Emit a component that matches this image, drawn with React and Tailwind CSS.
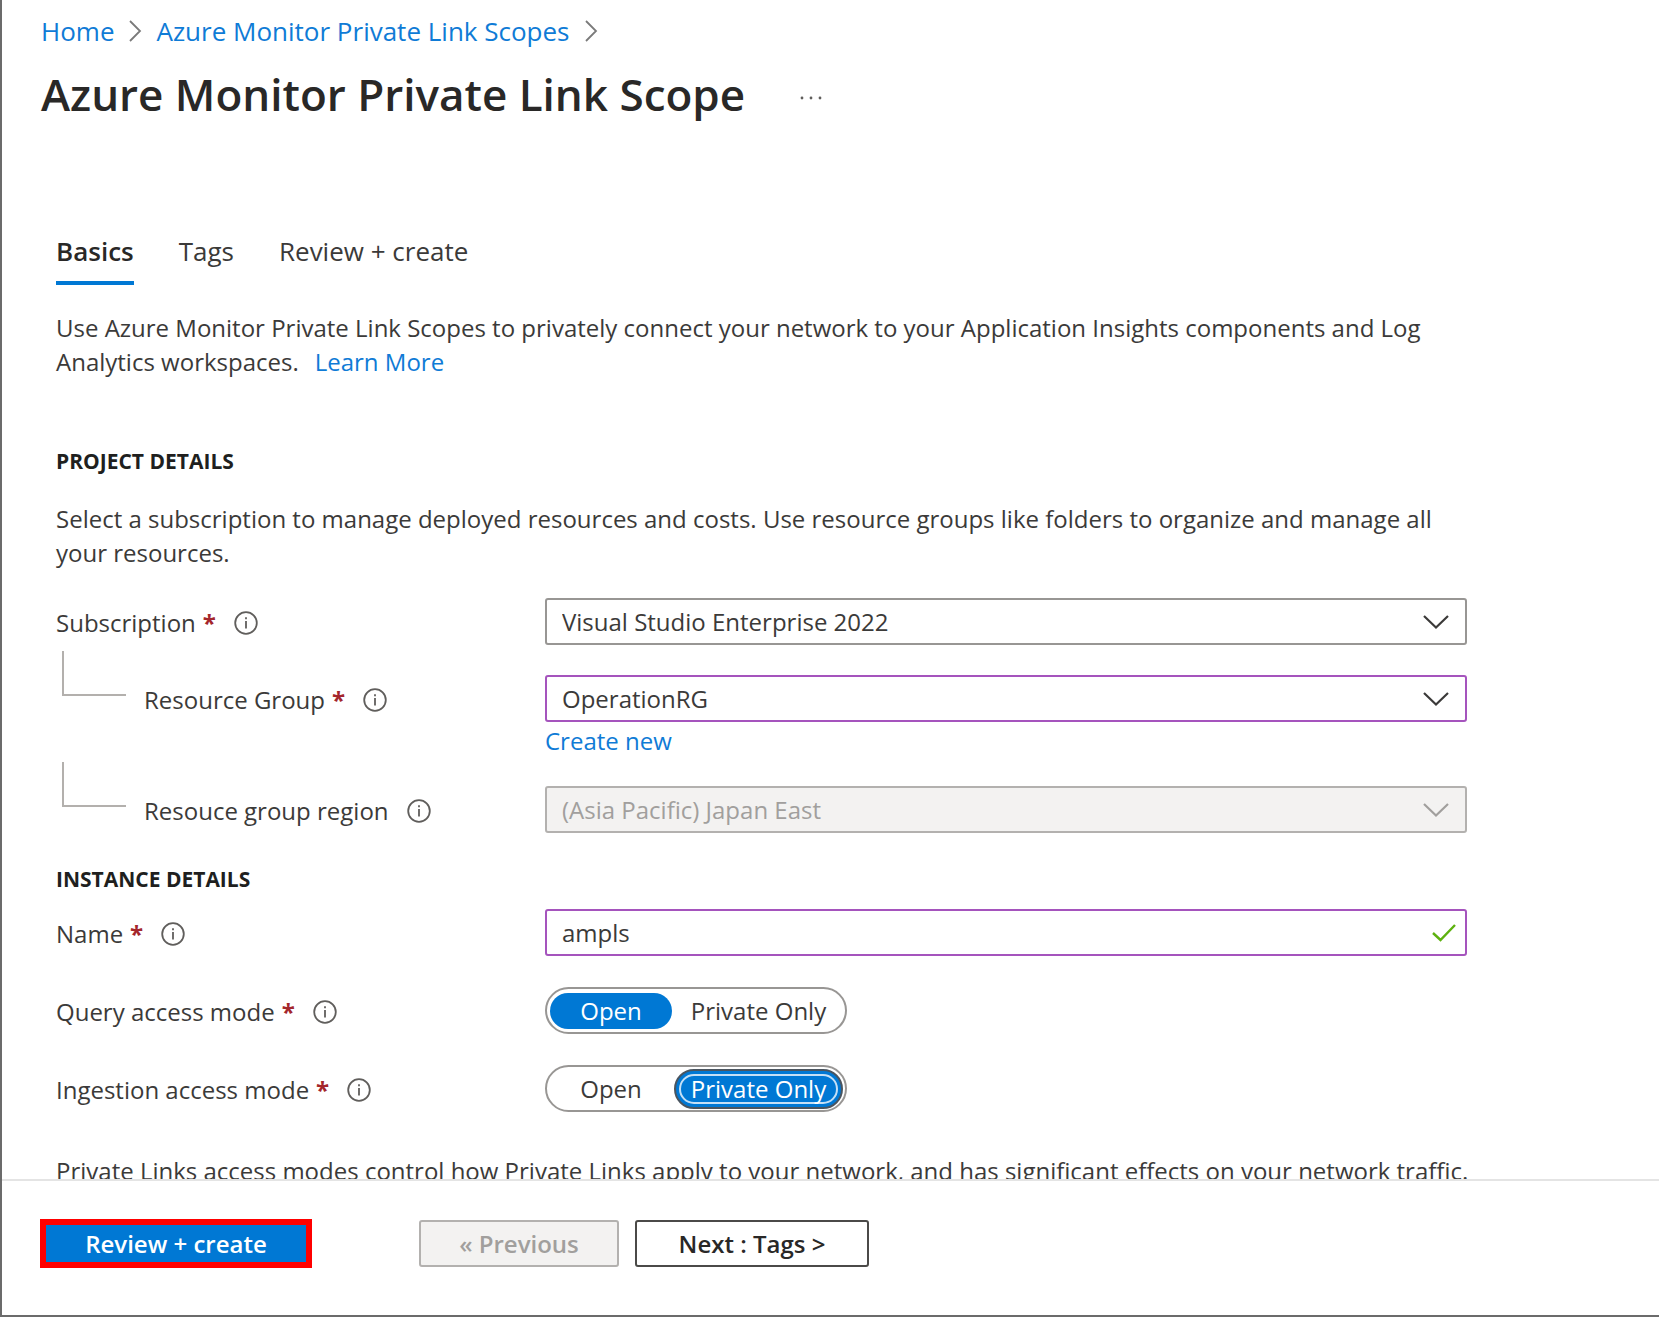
import React, { useState } from 'react';
import clsx from 'clsx';

const tabs = ['Basics', 'Tags', 'Review + create'];

const ChevronDown = ({ className }) => (
  <svg viewBox="0 0 26 16" fill="none" stroke="currentColor" strokeWidth="2.2" className={clsx('w-[26px] h-4', className)}>
    <path d="M1 2 L13 13.5 L25 2" />
  </svg>
);

const Crumb = () => (
  <svg viewBox="0 0 14 22" fill="none" stroke="#7a7a7a" strokeWidth="1.8" className="w-3.5 h-[22px]" aria-hidden="true">
    <path d="M2 1 L12 11 L2 21" />
  </svg>
);

const InfoButton = ({ about }) => (
  <button type="button" aria-label={`About ${about}`} className="ml-[18px] shrink-0">
    <svg viewBox="0 0 24 24" fill="none" stroke="#605e5c" className="w-6 h-6">
      <circle cx="12" cy="12" r="10.8" strokeWidth="1.8" />
      <path d="M12 10 V17.5" strokeWidth="1.8" />
      <path d="M12 6.2 V8.2" strokeWidth="1.8" />
    </svg>
  </button>
);

const FieldLabel = ({ id, text, required, nested }) => (
  <div className="flex items-center h-12 pt-0.5">
    {nested && <div className="w-16 h-[45px] ml-1.5 mr-[18px] -mt-[54px] border-l-2 border-b-2 border-[#b3b0ad]" />}
    <label id={`${id}-label`} htmlFor={id}>
      {text}
      {required && <span className="ml-[7px] font-bold text-[#a4262c]">*</span>}
    </label>
    <InfoButton about={text} />
  </div>
);

const SelectField = ({ id, value, edited, disabled }) => (
  <div className="relative">
    <select
      id={id}
      disabled={disabled}
      className={clsx(
        'block w-full h-[47px] pl-[15px] pr-14 rounded-[3px] border-2 appearance-none opacity-100',
        edited && 'border-[#a554bd] bg-white',
        disabled && 'border-[#b3b1af] bg-[#f3f2f1] text-[#a19f9d]',
        !edited && !disabled && 'border-[#989694] bg-white'
      )}
    >
      <option>{value}</option>
    </select>
    <ChevronDown
      className={clsx(
        'absolute right-[18px] top-4 pointer-events-none',
        disabled ? 'text-[#a19f9d]' : 'text-[#3b3a39]'
      )}
    />
  </div>
);

const ModeToggle = ({ id, initial, focused }) => {
  const [mode, setMode] = useState(initial);

  return (
    <div
      id={id}
      role="radiogroup"
      aria-labelledby={`${id}-label`}
      className="flex items-center gap-0.5 w-[302px] h-[47px] pl-[3px] pr-0.5 rounded-full border-2 border-[#989694] bg-white"
    >
      {['Open', 'Private Only'].map((option) => {
        const active = mode === option;
        return (
          <label
            key={option}
            className={clsx(
              'relative flex items-center justify-center rounded-full cursor-pointer',
              option === 'Open' ? 'w-[122px]' : 'flex-1',
              active && 'bg-[#0078d4] text-white',
              active && focused ? 'h-10 border-2 border-[#4a5560]' : 'h-9'
            )}
          >
            <input
              type="radio"
              name={id}
              checked={active}
              onChange={() => setMode(option)}
              className="sr-only"
            />
            {active && focused && (
              <span className="absolute inset-[3px] rounded-full border-2 border-[#c5e0f6]" />
            )}
            <span className="relative">{option}</span>
          </label>
        );
      })}
    </div>
  );
};

const SectionTitle = ({ children }) => (
  <h2 className="text-[21px] leading-[30px] font-bold text-[#201f1e]">{children}</h2>
);

const App = () => {
  const [activeTab, setActiveTab] = useState('Basics');

  return (
    <div className="flex flex-col h-screen overflow-hidden bg-white border-l-2 border-b-2 border-[#6b6b6b] font-['Open_Sans','Noto_Sans',sans-serif] text-[24px] leading-[34px] text-[#3b3a39]">
      <main className="flex-1 min-h-0 overflow-hidden">
        {/* Header */}
        <header className="pl-[39px] pt-[11px]">
          <nav aria-label="Breadcrumb" className="flex items-center gap-3.5 h-10 text-[26px] text-[#0f7bd6]">
            <a href="#home">Home</a>
            <Crumb />
            <a href="#scopes">Azure Monitor Private Link Scopes</a>
            <Crumb />
          </nav>
          <div className="flex items-center gap-[54px] mt-[11px] h-16">
            <h1 className="text-[44px] leading-[64px] font-semibold text-[#292827]">Azure Monitor Private Link Scope</h1>
            <button type="button" aria-label="More actions">
              <svg viewBox="0 0 24 12" fill="#605e5c" className="w-6 h-3">
                <circle cx="3" cy="10" r="1.4" />
                <circle cx="12" cy="10" r="1.4" />
                <circle cx="21" cy="10" r="1.4" />
              </svg>
            </button>
          </div>
        </header>

        <div className="max-w-[1465px] pl-[54px]">
          {/* Tabs */}
          <div role="tablist" className="flex gap-[45px] mt-[106px] text-[26px]">
            {tabs.map((tab) => (
              <button
                key={tab}
                type="button"
                role="tab"
                aria-selected={activeTab === tab}
                onClick={() => setActiveTab(tab)}
                className={clsx(
                  'h-[53px] pb-3 border-b-4',
                  activeTab === tab ? 'border-[#0078d4] font-semibold text-[#292827]' : 'border-transparent'
                )}
              >
                {tab}
              </button>
            ))}
          </div>

          <p className="mt-[26px]">
            Use Azure Monitor Private Link Scopes to privately connect your network to your Application Insights components and Log Analytics workspaces.
            <a href="#learn-more" className="ml-4 text-[#0f7bd6]">Learn More</a>
          </p>

          <div className="mt-[67px]">
            <SectionTitle>PROJECT DETAILS</SectionTitle>
          </div>
          <p className="mt-[26px]">
            Select a subscription to manage deployed resources and costs. Use resource groups like folders to organize and manage all your resources.
          </p>

          <div className="grid grid-cols-[489px_1fr] gap-y-[29px] mt-7">
            <FieldLabel id="subscription" text="Subscription" required />
            <SelectField id="subscription" value="Visual Studio Enterprise 2022" />

            <FieldLabel id="resource-group" text="Resource Group" required nested />
            <div>
              <SelectField id="resource-group" value="OperationRG" edited />
              <a href="#create-new" className="block w-max h-[35px] leading-[37px] text-[#0f7bd6]">Create new</a>
            </div>

            <FieldLabel id="region" text="Resouce group region" nested />
            <SelectField id="region" value="(Asia Pacific) Japan East" disabled />
          </div>

          <div className="mt-[30px]">
            <SectionTitle>INSTANCE DETAILS</SectionTitle>
          </div>

          <div className="grid grid-cols-[489px_1fr] gap-y-[30px] mt-[15px]">
            <FieldLabel id="name" text="Name" required />
            <div className="relative">
              <input
                id="name"
                type="text"
                defaultValue="ampls"
                className="block w-full h-[47px] pl-[15px] pr-12 rounded-[3px] border-2 border-[#a554bd] bg-white"
              />
              <svg viewBox="0 0 24 18" fill="none" stroke="#5db10f" strokeWidth="2.4" className="absolute right-[11px] top-[15px] w-6 h-[18px]">
                <path d="M1 9 L8.5 16 L23 1" />
              </svg>
            </div>

            <FieldLabel id="query-mode" text="Query access mode" required />
            <ModeToggle id="query-mode" initial="Open" />

            <FieldLabel id="ingestion-mode" text="Ingestion access mode" required />
            <ModeToggle id="ingestion-mode" initial="Private Only" focused />
          </div>

          <p className="mt-[41px] whitespace-nowrap">
            Private Links access modes control how Private Links apply to your network, and has significant effects on your network traffic.
          </p>
        </div>
      </main>

      {/* Footer */}
      <footer className="flex items-start shrink-0 h-[136px] pl-[38px] pt-[38px] border-t-2 border-[#e4e4e4] font-semibold">
        <button type="button" className="w-[272px] h-[49px] border-6 border-[#ff0000] bg-[#0078d4] text-white">
          Review + create
        </button>
        <button type="button" disabled className="w-[200px] h-[47px] mt-px ml-[107px] rounded-[3px] border-2 border-[#b3b1af] bg-[#f3f2f1] text-[#a19f9d]">
          « Previous
        </button>
        <button type="button" className="w-[234px] h-[47px] mt-px ml-4 rounded-[3px] border-2 border-[#4b4a48] bg-white text-[#292827]">
          Next : Tags &gt;
        </button>
      </footer>
    </div>
  );
};

export default App;
